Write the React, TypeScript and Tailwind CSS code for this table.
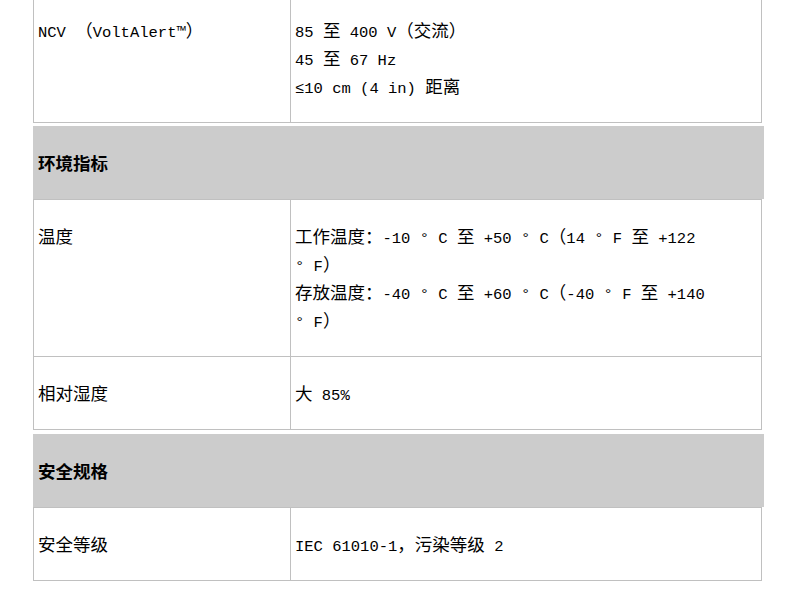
type Row = { label: string; lines: string[] };

// CJK runs get the wider CJK face, everything else stays in the mono face
function MixedLine({ text }: { text: string }) {
  const parts = text.split(/([\u3000-\u9fff\uff00-\uffef]+)/).filter(Boolean);
  return (
    <div className="flex h-[28px] items-baseline whitespace-pre">
      {parts.map((part, i) =>
        /[\u3000-\u9fff\uff00-\uffef]/.test(part) ? (
          <span
            key={i}
            className="text-[17.5px] leading-[28px] [font-family:'Noto_Sans_CJK_SC',sans-serif]"
          >
            {part}
          </span>
        ) : (
          <span key={i} className="leading-[28px]">
            {part}
          </span>
        )
      )}
    </div>
  );
}

function SpecTable({ rows }: { rows: Row[] }) {
  return (
    <div className="w-[729px] border border-[#c0c0c0]">
      {rows.map((row, i) => (
        <div
          key={row.label}
          className={`flex ${i > 0 ? "border-t border-[#c0c0c0]" : ""}`}
        >
          <div className="w-[257px] shrink-0 border-r border-[#c0c0c0] py-[22px] pl-[4px]">
            <MixedLine text={row.label} />
          </div>
          <div className="flex-1 py-[22px] pl-[4px]">
            {row.lines.map((line, j) => (
              <MixedLine key={j} text={line} />
            ))}
          </div>
        </div>
      ))}
    </div>
  );
}

function SectionHeader({ title }: { title: string }) {
  return (
    <div className="flex h-[73px] w-[731px] items-center bg-[#cccccc] pl-[5px] text-[17.5px] font-bold [font-family:'Noto_Sans_CJK_SC',sans-serif]">
      {title}
    </div>
  );
}

export default function App() {
  return (
    <div className="min-h-screen overflow-hidden bg-white text-black">
      <div className="-mt-[7px] ml-[33px] flex flex-col text-[15.5px] leading-[28px] [font-family:'Liberation_Mono','Noto_Sans_CJK_SC',monospace]">
        <SpecTable
          rows={[
            {
              label: "NCV （VoltAlert™）",
              lines: ["85 至 400 V（交流）", "45 至 67 Hz", "≤10 cm (4 in) 距离"],
            },
          ]}
        />
        <div className="mt-[3px]">
          <SectionHeader title="环境指标" />
        </div>
        <SpecTable
          rows={[
            {
              label: "温度",
              lines: [
                "工作温度：-10 ° C 至 +50 ° C（14 ° F 至 +122",
                "° F）",
                "存放温度：-40 ° C 至 +60 ° C（-40 ° F 至 +140",
                "° F）",
              ],
            },
            { label: "相对湿度", lines: ["大 85%"] },
          ]}
        />
        <div className="mt-[4px]">
          <SectionHeader title="安全规格" />
        </div>
        <SpecTable
          rows={[{ label: "安全等级", lines: ["IEC 61010-1，污染等级 2"] }]}
        />
      </div>
    </div>
  );
}
